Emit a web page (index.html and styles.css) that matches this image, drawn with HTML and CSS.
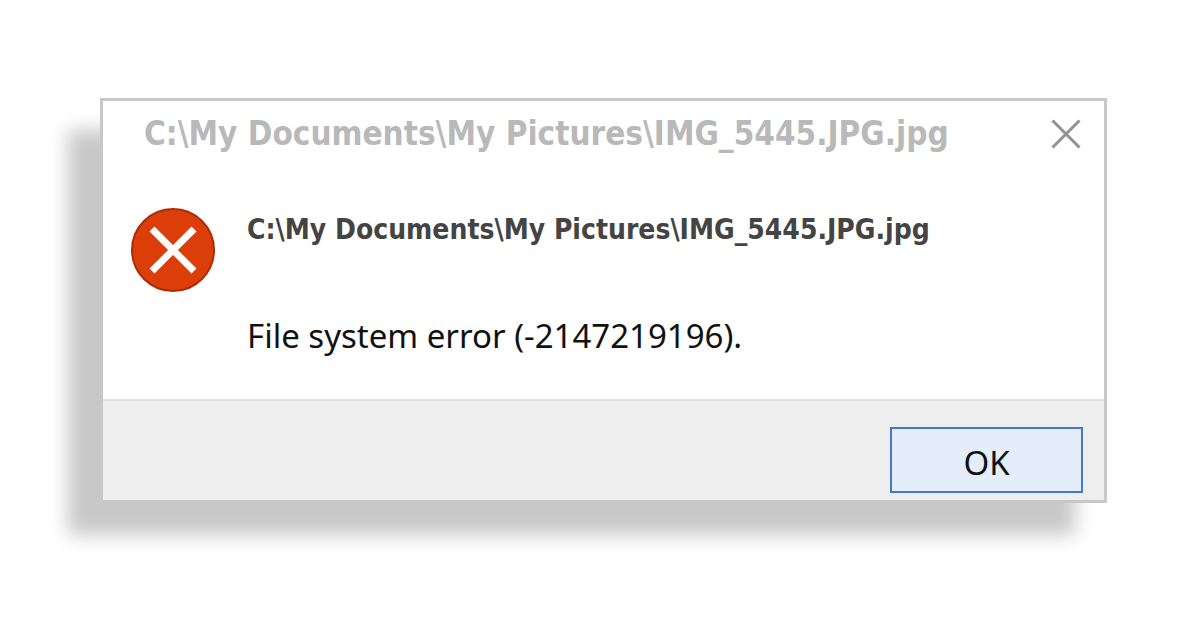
FILE: index.html
```html
<!DOCTYPE html>
<html lang="en">
<head>
<meta charset="utf-8">
<title>File system error</title>
<meta name="viewport" content="width=device-width, initial-scale=1">
<link rel="stylesheet" href="styles.css">
</head>
<body>
<main class="stage">
  <section class="dialog" role="alertdialog" aria-labelledby="title" aria-describedby="message">
    <header class="titlebar">
      <h1 class="title" id="title">C:\My Documents\My Pictures\IMG_5445.JPG.jpg</h1>
      <button class="close" type="button" aria-label="Close">
        <svg class="close-icon" viewBox="0 0 30 30" aria-hidden="true"><path d="M1.5 1.5 28.5 28.5M28.5 1.5 1.5 28.5"/></svg>
      </button>
    </header>
    <div class="content">
      <svg class="error-icon" viewBox="0 0 84 84" aria-hidden="true">
        <circle cx="42" cy="42" r="41"/>
        <path d="M21 21 63 63M63 21 21 63"/>
      </svg>
      <div class="message" id="message">
        <p class="path">C:\My Documents\My Pictures\IMG_5445.JPG.jpg</p>
        <p class="error">File system error (-2147219196).</p>
      </div>
    </div>
    <footer class="actions">
      <button class="ok" type="button">OK</button>
    </footer>
  </section>
</main>
</body>
</html>
```

FILE: styles.css
```css
* {
  box-sizing: border-box;
}

body {
  margin: 0;
  background: #fff;
  font-family: "Noto Sans", "Open Sans", sans-serif;
}

.stage {
  padding: 98px 93px 98px 100px;
}

.dialog {
  border: 3px solid #c8c8c8;
  background: #fff;
  box-shadow: -32px 32px 18px #c8c8c8;
}

.titlebar {
  display: flex;
  align-items: center;
  justify-content: space-between;
  padding: 11px 23px 0 41px;
}

.title,
.path {
  margin: 0;
  font-family: "DejaVu Sans Condensed", Tahoma, sans-serif;
  font-weight: bold;
  white-space: nowrap;
}

.title {
  color: #b9b9b9;
  font-size: 33px;
  line-height: 44px;
}

.close {
  display: flex;
  padding: 0;
  border: 0;
  background: none;
}

.close-icon {
  width: 30px;
  height: 30px;
  fill: none;
  stroke: #929292;
  stroke-width: 3;
}

.content {
  display: flex;
  gap: 32px;
  padding: 52px 28px 39px;
}

.error-icon {
  flex: none;
  width: 84px;
  height: 84px;
}

.error-icon circle {
  fill: #dc3e0a;
  stroke: #ad2c08;
  stroke-width: 2;
}

.error-icon path {
  fill: none;
  stroke: #fff;
  stroke-width: 7;
}

.path {
  color: #444;
  font-size: 28px;
  line-height: 44px;
}

.error {
  margin: 60px 0 0;
  color: #111;
  font-size: 33px;
  line-height: 48px;
}

.actions {
  display: flex;
  justify-content: flex-end;
  padding: 26px 21px 7px;
  border-top: 2px solid #dfdfdf;
  background: #eee;
}

.ok {
  width: 193px;
  height: 66px;
  padding: 4px 0 0;
  border: 2px solid #4179cc;
  background: #e4eefb;
  color: #111;
  font: 33px "Noto Sans", "Open Sans", sans-serif;
}
```
